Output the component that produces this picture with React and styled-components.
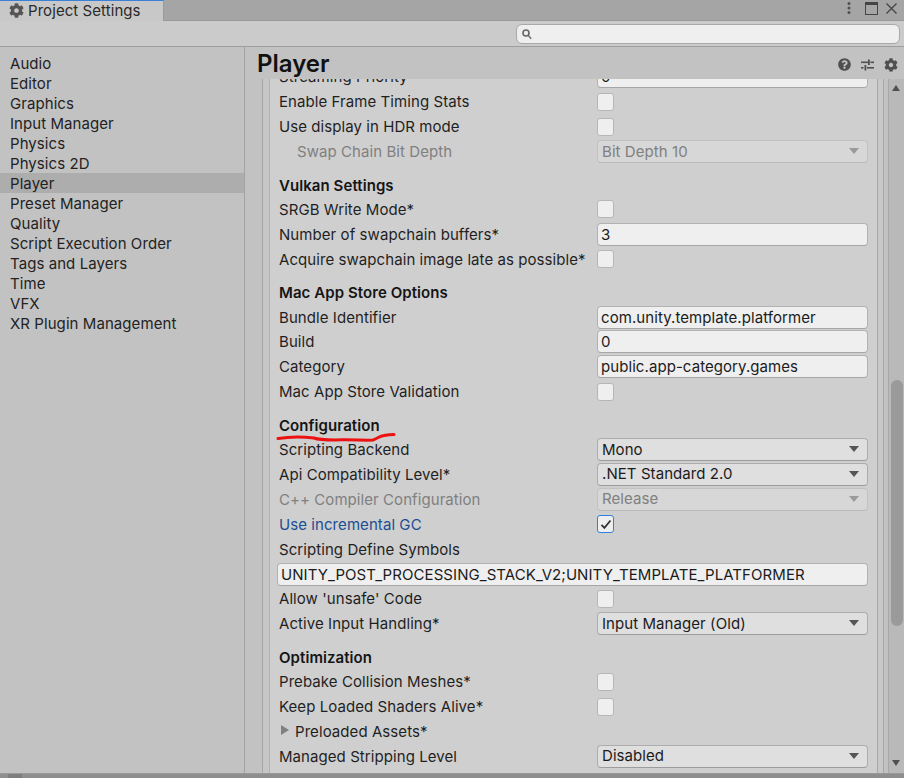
import React from 'react'
import styled, { createGlobalStyle } from 'styled-components'
import { FaCog, FaQuestionCircle } from 'react-icons/fa'

const GlobalStyle = createGlobalStyle`
  html, body { margin: 0; padding: 0; height: 100%; overflow: hidden; }
  body { font-family: Inter, "Liberation Sans", sans-serif; background: #8e8e8e; }
`

const Window = styled.div`
  width: 904px;
  height: 778px;
  display: flex;
  flex-direction: column;
  font-size: 15px;
  letter-spacing: 0.07px;
  color: #1b1b1b;
  overflow: hidden;
  position: relative;
`

const TabBar = styled.div`
  height: 21px;
  flex: none;
  box-sizing: border-box;
  display: flex;
  justify-content: space-between;
  background: #a5a5a5;
  border-bottom: 1px solid #989898;
`

const Tab = styled.div`
  width: 164px;
  height: 21px;
  box-sizing: border-box;
  padding-left: 9px;
  padding-bottom: 1px;
  display: flex;
  align-items: center;
  gap: 4px;
  background: #c8c8c8;
  border-top: 1px solid #3a7fd8;
  border-right: 1px solid #9a9a9a;
  color: #2a2a2a;
  svg { color: #555; }
`

const WindowButtons = styled.div`
  display: flex;
  align-items: center;
  gap: 8px;
  padding: 0 7px 4px 0;
  svg { display: block; }
`

const Toolbar = styled.div`
  height: 26px;
  flex: none;
  box-sizing: border-box;
  padding: 3px 4px 0 516px;
  background: #cbcbcb;
  border-bottom: 1px solid #9e9e9e;
`

const Search = styled.div`
  height: 20px;
  box-sizing: border-box;
  padding-left: 5px;
  display: flex;
  align-items: center;
  background: #efefef;
  border: 1px solid #a9a9a9;
  border-radius: 6px;
`

const Main = styled.div`
  flex: 1;
  display: flex;
  min-height: 0;
`

const Sidebar = styled.div`
  width: 245px;
  flex: none;
  box-sizing: border-box;
  padding-top: 6px;
  background: #c2c2c2;
  border-right: 1px solid #a2a2a2;
`

const NavItem = styled.div`
  height: 20px;
  line-height: 22px;
  padding-left: 10px;
  color: #222;
  background: ${({ $active }) => ($active ? '#adadad' : 'transparent')};
`

const Panel = styled.div`
  flex: 1;
  min-width: 0;
  display: flex;
  flex-direction: column;
`

const PanelHeader = styled.div`
  height: 32px;
  flex: none;
  padding: 0 6px 0 12px;
  display: flex;
  align-items: center;
  justify-content: space-between;
  background: #c2c2c2;
  position: relative;
  z-index: 1;
`

const Title = styled.h1`
  margin: 0;
  font-size: 24px;
  font-weight: 600;
  letter-spacing: 0;
  color: #111;
`

const HeaderIcons = styled.div`
  display: flex;
  align-items: center;
  gap: 10px;
  margin-top: 3px;
  color: #505050;
  svg { display: block; }
`

const PanelBody = styled.div`
  flex: 1;
  min-height: 0;
  display: flex;
`

const LeftGutter = styled.div`
  width: 25px;
  flex: none;
  box-sizing: border-box;
  background: linear-gradient(to right, #c2c2c2 17px, #a6a6a6 17px, #a6a6a6 18px, #c6c6c6 18px);
  border-right: 1px solid #b2b2b2;
`

const Content = styled.div`
  flex: 1;
  min-width: 0;
  background: #cfcfcf;
  overflow: hidden;
`

const List = styled.div`
  margin-top: -14.6px;
  padding: 0 9px;
`

const Heading = styled.div`
  height: 24.9px;
  margin-top: 8.1px;
  padding-top: 1px;
  box-sizing: border-box;
  display: flex;
  align-items: center;
  font-weight: 600;
  color: #151515;
`

const Row = styled.div`
  height: 24.9px;
  display: flex;
  align-items: center;
  color: ${({ $tone }) =>
    $tone === 'disabled' ? '#808080' : $tone === 'link' ? '#1a4e92' : '#1f1f1f'};
  padding-left: ${({ $indent }) => $indent || 0}px;
`

const Label = styled.div`
  width: ${({ $indent }) => 318 - ($indent || 0)}px;
  flex: none;
  white-space: nowrap;
`

const TextField = styled.div`
  flex: 1;
  height: 23px;
  box-sizing: border-box;
  padding-left: 3px;
  line-height: 21px;
  background: #efefef;
  border: 1px solid #b2b2b2;
  border-bottom-color: #a6a6a6;
  border-radius: 4px;
  color: #1b1b1b;
  white-space: nowrap;
`

const WideField = styled(TextField)`
  margin-left: -2px;
  padding-left: 3px;
`

const Select = styled.div`
  flex: 1;
  height: 23px;
  box-sizing: border-box;
  padding: 0 8px 1px 4px;
  display: flex;
  align-items: center;
  justify-content: space-between;
  background: ${({ $disabled }) => ($disabled ? '#d7d7d7' : '#dfdfdf')};
  border: 1px solid ${({ $disabled }) => ($disabled ? '#c2c2c2' : '#adadad')};
  border-bottom-color: ${({ $disabled }) => ($disabled ? '#bababa' : '#9c9c9c')};
  border-radius: 4px;
  color: ${({ $disabled }) => ($disabled ? '#808080' : '#1b1b1b')};
`

const Caret = styled.span`
  width: 0;
  height: 0;
  border-left: 5px solid transparent;
  border-right: 5px solid transparent;
  border-top: 6px solid ${({ $disabled }) => ($disabled ? '#9a9a9a' : '#555')};
`

const Checkbox = styled.div`
  width: 17px;
  height: 18px;
  box-sizing: border-box;
  display: flex;
  align-items: center;
  justify-content: center;
  background: #efefef;
  border: 1px solid ${({ $checked }) => ($checked ? '#2f7fe0' : '#b6b6b6')};
  border-radius: 3px;
`

const FoldArrow = styled.span`
  width: 0;
  height: 0;
  margin: -3px 6px 0 2px;
  border-top: 5.5px solid transparent;
  border-bottom: 5.5px solid transparent;
  border-left: 8px solid #808080;
`

const RightGutter = styled.div`
  width: 12px;
  flex: none;
  box-sizing: border-box;
  background: linear-gradient(to right, #c8c8c8 5px, #a8a8a8 5px, #a8a8a8 6px, #c2c2c2 6px);
  border-left: 1px solid #a8a8a8;
  border-right: 1px solid #a8a8a8;
`

const Scrollbar = styled.div`
  width: 15px;
  flex: none;
  box-sizing: border-box;
  padding: 301px 1px 0 2px;
  background: #b9b9b9;
  position: relative;
`

const Thumb = styled.div`
  height: 246px;
  border-radius: 6px;
  background: #9a9a9a;
`

const ScrollArrow = styled.span`
  position: absolute;
  left: 3px;
  width: 0;
  height: 0;
  border-left: 4.5px solid transparent;
  border-right: 4.5px solid transparent;
  ${({ $up }) =>
    $up
      ? 'top: 6px; border-bottom: 6px solid #505050;'
      : 'bottom: 7px; border-top: 6px solid #505050;'}
`

const BottomStrip = styled.div`
  height: 5px;
  flex: none;
  box-sizing: border-box;
  padding-left: 8px;
  background: #8e8e8e;
  border-top: 1px solid #999;
`

const StripTab = styled.div`
  width: 14px;
  height: 4px;
  background: #7e7e7e;
`

const Annotation = styled.svg`
  position: absolute;
  left: 270px;
  top: 428px;
  pointer-events: none;
`

const navItems = ['Audio', 'Editor', 'Graphics', 'Input Manager', 'Physics', 'Physics 2D', 'Player', 'Preset Manager', 'Quality', 'Script Execution Order', 'Tags and Layers', 'Time', 'VFX', 'XR Plugin Management']

const rows = [
  { type: 'text', label: 'Streaming Priority', value: '0' },
  { type: 'check', label: 'Enable Frame Timing Stats' },
  { type: 'check', label: 'Use display in HDR mode' },
  { type: 'select', label: 'Swap Chain Bit Depth', value: 'Bit Depth 10', disabled: true, indent: 18 },
  { type: 'heading', label: 'Vulkan Settings' },
  { type: 'check', label: 'SRGB Write Mode*' },
  { type: 'text', label: 'Number of swapchain buffers*', value: '3' },
  { type: 'check', label: 'Acquire swapchain image late as possible*' },
  { type: 'heading', label: 'Mac App Store Options' },
  { type: 'text', label: 'Bundle Identifier', value: 'com.unity.template.platformer' },
  { type: 'text', label: 'Build', value: '0' },
  { type: 'text', label: 'Category', value: 'public.app-category.games' },
  { type: 'check', label: 'Mac App Store Validation' },
  { type: 'heading', label: 'Configuration' },
  { type: 'select', label: 'Scripting Backend', value: 'Mono' },
  { type: 'select', label: 'Api Compatibility Level*', value: '.NET Standard 2.0' },
  { type: 'select', label: 'C++ Compiler Configuration', value: 'Release', disabled: true },
  { type: 'check', label: 'Use incremental GC', checked: true, tone: 'link' },
  { type: 'label', label: 'Scripting Define Symbols' },
  { type: 'wide', value: 'UNITY_POST_PROCESSING_STACK_V2;UNITY_TEMPLATE_PLATFORMER' },
  { type: 'check', label: "Allow 'unsafe' Code" },
  { type: 'select', label: 'Active Input Handling*', value: 'Input Manager (Old)' },
  { type: 'heading', label: 'Optimization' },
  { type: 'check', label: 'Prebake Collision Meshes*' },
  { type: 'check', label: 'Keep Loaded Shaders Alive*' },
  { type: 'fold', label: 'Preloaded Assets*' },
  { type: 'select', label: 'Managed Stripping Level', value: 'Disabled' },
]

const SettingRow = ({ row }) => {
  if (row.type === 'heading') return <Heading>{row.label}</Heading>
  if (row.type === 'wide') return <Row><WideField>{row.value}</WideField></Row>
  if (row.type === 'fold') return <Row><FoldArrow />{row.label}</Row>
  if (row.type === 'label') return <Row>{row.label}</Row>

  const tone = row.disabled ? 'disabled' : row.tone
  return (
    <Row $tone={tone} $indent={row.indent}>
      <Label $indent={row.indent}>{row.label}</Label>
      {row.type === 'text' && <TextField>{row.value}</TextField>}
      {row.type === 'select' && (
        <Select $disabled={row.disabled}>
          {row.value}
          <Caret $disabled={row.disabled} />
        </Select>
      )}
      {row.type === 'check' && (
        <Checkbox $checked={row.checked}>
          {row.checked && (
            <svg width="12" height="11" viewBox="0 0 12 11" fill="none">
              <path d="M1.5 5.8 L4.4 8.8 L10.5 1.5" stroke="#333" strokeWidth="1.8" />
            </svg>
          )}
        </Checkbox>
      )}
    </Row>
  )
}

export default function App() {
  return (
    <Window>
      <GlobalStyle />
      <TabBar>
        <Tab>
          <FaCog size={15} />
          Project Settings
        </Tab>
        <WindowButtons>
          <svg width="4" height="12" viewBox="0 0 4 12" fill="#505050" style={{ marginRight: 6 }}>
            <circle cx="2" cy="1.6" r="1.5" />
            <circle cx="2" cy="6" r="1.5" />
            <circle cx="2" cy="10.4" r="1.5" />
          </svg>
          <svg width="13" height="13" viewBox="0 0 13 13" fill="none" stroke="#444">
            <rect x="0.5" y="0.5" width="12" height="12" />
            <path d="M0.5 2 H12.5" strokeWidth="2" />
          </svg>
          <svg width="11" height="11" viewBox="0 0 11 11" fill="none" stroke="#444" strokeWidth="1.3">
            <path d="M0.5 0.5 L10.5 10.5 M10.5 0.5 L0.5 10.5" />
          </svg>
        </WindowButtons>
      </TabBar>
      <Toolbar>
        <Search>
          <svg width="10" height="11" viewBox="0 0 10 11" fill="none" stroke="#666">
            <circle cx="4" cy="4" r="3" strokeWidth="1.6" />
            <path d="M6.2 6.4 L9.2 9.8" strokeWidth="1.4" />
          </svg>
        </Search>
      </Toolbar>
      <Main>
        <Sidebar>
          {navItems.map((item) => (
            <NavItem key={item} $active={item === 'Player'}>{item}</NavItem>
          ))}
        </Sidebar>
        <Panel>
          <PanelHeader>
            <Title>Player</Title>
            <HeaderIcons>
              <FaQuestionCircle size={13} />
              <svg width="13" height="12" viewBox="0 0 13 12" fill="#505050">
                <rect x="0" y="2.5" width="7" height="1.6" />
                <rect x="7" y="0.5" width="1.8" height="5.5" />
                <rect x="9.5" y="2.5" width="3.5" height="1.6" />
                <rect x="0" y="8" width="2.5" height="1.6" />
                <rect x="3.5" y="6" width="1.8" height="5.5" />
                <rect x="6" y="8" width="7" height="1.6" />
              </svg>
              <FaCog size={14} />
            </HeaderIcons>
          </PanelHeader>
          <PanelBody>
            <LeftGutter />
            <Content>
              <List>
                {rows.map((row, i) => (
                  <SettingRow key={i} row={row} />
                ))}
              </List>
            </Content>
            <RightGutter />
            <Scrollbar>
              <ScrollArrow $up />
              <Thumb />
              <ScrollArrow />
            </Scrollbar>
          </PanelBody>
        </Panel>
      </Main>
      <BottomStrip>
        <StripTab />
      </BottomStrip>
      <Annotation width="130" height="18" viewBox="0 0 130 18" fill="none">
        <path d="M8 10.5 C20 8.5 36 9 44 10 C50 12.5 62 12 76 11.8 C86 11.8 98 12.5 103 12 C107 10.5 110 8 114 7.5 C118 6.8 121 6.5 124 6.5" stroke="#ee1111" strokeWidth="3" strokeLinecap="round" />
      </Annotation>
    </Window>
  )
}
